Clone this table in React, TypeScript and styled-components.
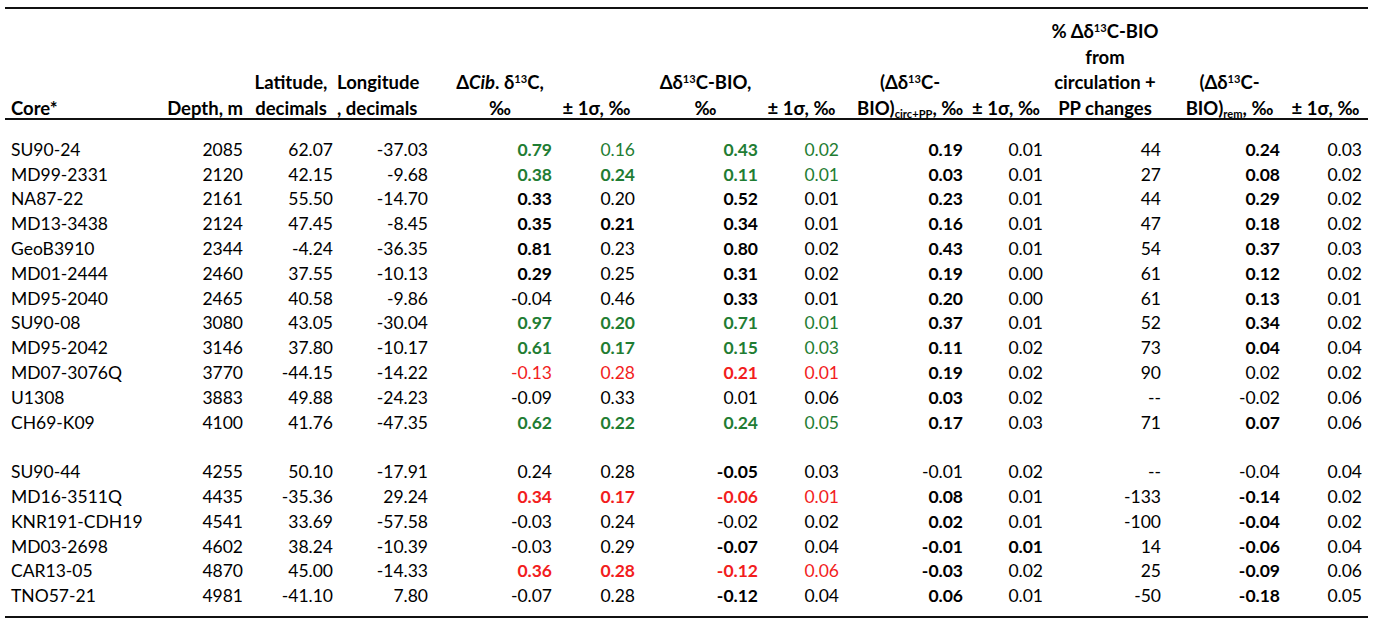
import React from 'react';
import styled, { createGlobalStyle } from 'styled-components';

const GlobalStyle = createGlobalStyle`
  html, body {
    margin: 0;
    padding: 0;
    background: #fff;
  }
  body {
    font-family: Lato, "Open Sans", sans-serif;
    color: #000;
  }
`;

const Page = styled.div`
  padding: 7px 0 0 5px;
`;

const Table = styled.table`
  width: 1363px;
  table-layout: fixed;
  border-collapse: collapse;
  font-size: 17.5px;
  border-top: 2px solid #111;
  border-bottom: 2px solid #111;
`;

const HeadRow = styled.tr`
  height: 111px;
  border-bottom: 2px solid #111;
`;

const HeadCell = styled.th<{ $align?: string; $shift?: number }>`
  vertical-align: bottom;
  font-weight: 700;
  font-size: 18.5px;
  line-height: 25.4px;
  white-space: nowrap;
  text-align: ${p => p.$align || 'center'};
  padding: 0 3px 0 ${p => 3 + (p.$shift || 0)}px;
  &:first-child {
    padding-left: 6px;
  }
`;

const HeadText = styled.span`
  display: block;
  margin-bottom: -3px;
`;

const Spacer = styled.tr<{ $h: number }>`
  height: ${p => p.$h}px;
`;

const Row = styled.tr`
  height: 24.8px;
`;

const Cell = styled.td<{ $bold?: boolean; $tone?: string; $left?: boolean }>`
  padding: 0 3px;
  line-height: 20px;
  white-space: nowrap;
  text-align: ${p => (p.$left ? 'left' : 'right')};
  font-weight: ${p => (p.$bold ? 700 : 400)};
  color: ${p => (p.$tone === 'g' ? '#1f7d33' : p.$tone === 'r' ? '#f21d1d' : '#000')};
  &:first-child {
    padding-left: 6px;
  }
  &:last-child {
    padding-right: 6px;
  }
`;

const Sup = styled.sup`
  font-size: 0.6em;
  line-height: 0;
  vertical-align: 0.55em;
`;

const Sub = styled.sub`
  font-size: 0.6em;
  line-height: 0;
  vertical-align: -0.25em;
`;

const widths = [150, 91, 90, 95, 124, 83, 123, 81, 124, 80, 118, 119, 85];

const sigma = <HeadText>± 1σ, ‰</HeadText>;

const rows: string[][] = [
  ['SU90-24', '2085', '62.07', '-37.03', '*g0.79', 'g0.16', '*g0.43', 'g0.02', '*0.19', '0.01', '44', '*0.24', '0.03'],
  ['MD99-2331', '2120', '42.15', '-9.68', '*g0.38', '*g0.24', '*g0.11', 'g0.01', '*0.03', '0.01', '27', '*0.08', '0.02'],
  ['NA87-22', '2161', '55.50', '-14.70', '*0.33', '0.20', '*0.52', '0.01', '*0.23', '0.01', '44', '*0.29', '0.02'],
  ['MD13-3438', '2124', '47.45', '-8.45', '*0.35', '*0.21', '*0.34', '0.01', '*0.16', '0.01', '47', '*0.18', '0.02'],
  ['GeoB3910', '2344', '-4.24', '-36.35', '*0.81', '0.23', '*0.80', '0.02', '*0.43', '0.01', '54', '*0.37', '0.03'],
  ['MD01-2444', '2460', '37.55', '-10.13', '*0.29', '0.25', '*0.31', '0.02', '*0.19', '0.00', '61', '*0.12', '0.02'],
  ['MD95-2040', '2465', '40.58', '-9.86', '-0.04', '0.46', '*0.33', '0.01', '*0.20', '0.00', '61', '*0.13', '0.01'],
  ['SU90-08', '3080', '43.05', '-30.04', '*g0.97', '*g0.20', '*g0.71', 'g0.01', '*0.37', '0.01', '52', '*0.34', '0.02'],
  ['MD95-2042', '3146', '37.80', '-10.17', '*g0.61', '*g0.17', '*g0.15', 'g0.03', '*0.11', '0.02', '73', '*0.04', '0.04'],
  ['MD07-3076Q', '3770', '-44.15', '-14.22', 'r-0.13', 'r0.28', '*r0.21', 'r0.01', '*0.19', '0.02', '90', '0.02', '0.02'],
  ['U1308', '3883', '49.88', '-24.23', '-0.09', '0.33', '0.01', '0.06', '*0.03', '0.02', '--', '-0.02', '0.06'],
  ['CH69-K09', '4100', '41.76', '-47.35', '*g0.62', '*g0.22', '*g0.24', 'g0.05', '*0.17', '0.03', '71', '*0.07', '0.06'],
  [],
  ['SU90-44', '4255', '50.10', '-17.91', '0.24', '0.28', '*-0.05', '0.03', '-0.01', '0.02', '--', '-0.04', '0.04'],
  ['MD16-3511Q', '4435', '-35.36', '29.24', '*r0.34', '*r0.17', '*r-0.06', 'r0.01', '*0.08', '0.01', '-133', '*-0.14', '0.02'],
  ['KNR191-CDH19', '4541', '33.69', '-57.58', '-0.03', '0.24', '-0.02', '0.02', '*0.02', '0.01', '-100', '*-0.04', '0.02'],
  ['MD03-2698', '4602', '38.24', '-10.39', '-0.03', '0.29', '*-0.07', '0.04', '*-0.01', '*0.01', '14', '*-0.06', '0.04'],
  ['CAR13-05', '4870', '45.00', '-14.33', '*r0.36', '*r0.28', '*r-0.12', 'r0.06', '*-0.03', '0.02', '25', '*-0.09', '0.06'],
  ['TNO57-21', '4981', '-41.10', '7.80', '-0.07', '0.28', '*-0.12', '0.04', '*0.06', '0.01', '-50', '*-0.18', '0.05'],
];

// "*" = bold, then optional "g"/"r" for colour
const parse = (raw: string) => {
  let s = raw;
  const bold = s.startsWith('*');
  if (bold) s = s.slice(1);
  let tone = '';
  if (s[0] === 'g' || s[0] === 'r') {
    tone = s[0];
    s = s.slice(1);
  }
  return { bold, tone, text: s };
};

const App = () => (
  <Page>
    <GlobalStyle />
    <Table>
      <colgroup>
        {widths.map((w, i) => (
          <col key={i} style={{ width: w }} />
        ))}
      </colgroup>
      <thead>
        <HeadRow>
          <HeadCell $align="left">
            <HeadText>Core*</HeadText>
          </HeadCell>
          <HeadCell $align="right">
            <HeadText>Depth, m</HeadText>
          </HeadCell>
          <HeadCell>
            <HeadText>
              Latitude,
              <br />
              decimals
            </HeadText>
          </HeadCell>
          <HeadCell $align="left" $shift={-2}>
            <HeadText>
              Longitude
              <br />, decimals
            </HeadText>
          </HeadCell>
          <HeadCell $shift={14}>
            <HeadText>
              Δ<i>Cib</i>. δ<Sup>13</Sup>C,
              <br />‰
            </HeadText>
          </HeadCell>
          <HeadCell>{sigma}</HeadCell>
          <HeadCell $shift={12}>
            <HeadText>
              Δδ<Sup>13</Sup>C-BIO,
              <br />‰
            </HeadText>
          </HeadCell>
          <HeadCell>{sigma}</HeadCell>
          <HeadCell $shift={12}>
            <HeadText>
              (Δδ<Sup>13</Sup>C-
              <br />
              BIO)<Sub>circ+PP</Sub>, ‰
            </HeadText>
          </HeadCell>
          <HeadCell>{sigma}</HeadCell>
          <HeadCell>
            <HeadText>
              % Δδ<Sup>13</Sup>C-BIO
              <br />
              from
              <br />
              circulation +
              <br />
              PP changes
            </HeadText>
          </HeadCell>
          <HeadCell $shift={12}>
            <HeadText>
              (Δδ<Sup>13</Sup>C-
              <br />
              BIO)<Sub>rem</Sub>, ‰
            </HeadText>
          </HeadCell>
          <HeadCell>{sigma}</HeadCell>
        </HeadRow>
      </thead>
      <tbody>
        <Spacer $h={18.5}>
          <td colSpan={13} />
        </Spacer>
        {rows.map((r, i) =>
          r.length === 0 ? (
            <Row key={i}>
              <td colSpan={13} />
            </Row>
          ) : (
            <Row key={i}>
              {r.map((v, j) => {
                const { bold, tone, text } = parse(v);
                return (
                  <Cell key={j} $left={j === 0} $bold={bold} $tone={tone}>
                    {text}
                  </Cell>
                );
              })}
            </Row>
          ),
        )}
        <Spacer $h={8}>
          <td colSpan={13} />
        </Spacer>
      </tbody>
    </Table>
  </Page>
);

export default App;
